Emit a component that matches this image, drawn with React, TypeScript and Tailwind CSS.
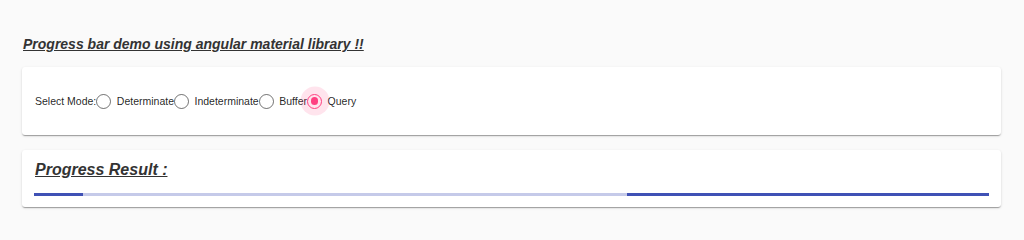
import React from "react";

// ---------------------------------------------------------------------------
// Radio option
// ---------------------------------------------------------------------------
function RadioOption({ label, checked }: { label: string; checked?: boolean }) {
  return (
    <label className="flex items-center cursor-pointer">
      <span className="relative flex h-[15px] w-[15px] shrink-0 items-center justify-center">
        {checked && (
          <span className="absolute left-1/2 top-1/2 h-[29px] w-[29px] -translate-x-1/2 -translate-y-1/2 rounded-full bg-[rgba(255,64,129,0.14)]" />
        )}
        <span
          className={
            checked
              ? "relative flex h-[15px] w-[15px] items-center justify-center rounded-full border-[1.5px] border-[#ff4081]"
              : "relative flex h-[15px] w-[15px] items-center justify-center rounded-full border-[1.5px] border-[rgba(0,0,0,0.54)]"
          }
        >
          {checked && <span className="h-[7.5px] w-[7.5px] rounded-full bg-[#ff4081]" />}
        </span>
      </span>
      <span className="pl-[5.5px] text-[10.5px] leading-[15px] text-[rgba(0,0,0,0.87)]">{label}</span>
    </label>
  );
}

export default function App() {
  const modes = ["Determinate", "Indeterminate", "Buffer", "Query"];
  const selected = "Query";

  return (
    <div
      className="min-h-screen bg-[#fafafa] px-[22px] pt-[36px]"
      style={{ fontFamily: '"Liberation Sans", Arial, sans-serif' }}
    >
      {/* Header */}
      <h3 className="pl-px text-[14px] leading-[16px] font-bold italic underline text-[#333]">
        Progress bar demo using angular material library !!
      </h3>

      {/* Mode selector */}
      <div className="mt-[15px] flex h-[68px] w-[979px] items-center rounded-[3px] bg-white px-[12px] shadow-[0_2px_1px_-1px_rgba(0,0,0,0.2),0_1px_1px_0_rgba(0,0,0,0.14),0_1px_3px_0_rgba(0,0,0,0.12)]">
        <span className="pl-px text-[10.5px] leading-[15px] text-[rgba(0,0,0,0.87)]">Select Mode:</span>
        <div className="flex items-center">
          {modes.map((m) => (
            <RadioOption key={m} label={m} checked={m === selected} />
          ))}
        </div>
      </div>

      {/* Result */}
      <div className="mt-[15px] w-[979px] rounded-[3px] bg-white px-[12px] pt-[11px] pb-[11px] shadow-[0_2px_1px_-1px_rgba(0,0,0,0.2),0_1px_1px_0_rgba(0,0,0,0.14),0_1px_3px_0_rgba(0,0,0,0.12)]">
        <h2 className="pl-px text-[16px] leading-[18px] font-bold italic underline text-[#333]">
          Progress Result :
        </h2>
        <div className="mt-[14px] flex h-[3px] w-full">
          <div className="w-[49px] bg-[#3f51b5]" />
          <div className="flex-1 bg-[#c5cae9]" />
          <div className="w-[362px] bg-[#3f51b5]" />
        </div>
      </div>
    </div>
  );
}
